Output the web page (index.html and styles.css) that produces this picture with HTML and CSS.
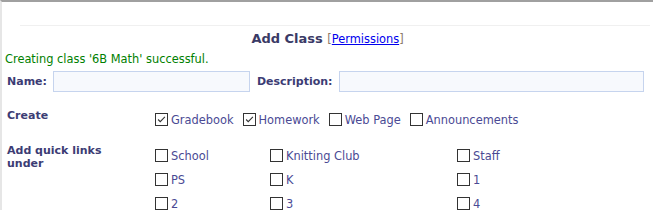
FILE: index.html
```html
<!DOCTYPE html>
<html lang="en">
<head>
    <meta charset="UTF-8">
    <title>Add Class</title>
    <link rel="stylesheet" href="styles.css">
</head>
<body>
    <div class="page">
        <div class="rule"></div>
        <h1 class="title">Add Class <span class="bracket">[<a href="#">Permissions</a>]</span></h1>
        <p class="msg">Creating class '6B Math' successful.</p>

        <div class="fields">
            <label class="lbl">Name:</label>
            <input type="text" class="txt name">
            <label class="lbl desc-lbl">Description:</label>
            <input type="text" class="txt desc">
        </div>

        <div class="row create">
            <div class="lbl">Create</div>
            <div class="opts">
                <span class="opt"><span class="box checked"><svg viewBox="0 0 13 13"><path d="M2.5 6.5 L5 9 L10.5 3.5" fill="none" stroke="#333" stroke-width="1.3"/></svg></span>Gradebook</span>
                <span class="opt"><span class="box checked"><svg viewBox="0 0 13 13"><path d="M2.5 6.5 L5 9 L10.5 3.5" fill="none" stroke="#333" stroke-width="1.3"/></svg></span>Homework</span>
                <span class="opt"><span class="box"></span>Web Page</span>
                <span class="opt"><span class="box"></span>Announcements</span>
            </div>
        </div>

        <div class="row links">
            <div class="lbl">Add quick links<br>under</div>
            <div class="grid">
                <span class="opt"><span class="box"></span>School</span>
                <span class="opt"><span class="box"></span>Knitting Club</span>
                <span class="opt"><span class="box"></span>Staff</span>
                <span class="opt"><span class="box"></span>PS</span>
                <span class="opt"><span class="box"></span>K</span>
                <span class="opt"><span class="box"></span>1</span>
                <span class="opt"><span class="box"></span>2</span>
                <span class="opt"><span class="box"></span>3</span>
                <span class="opt"><span class="box"></span>4</span>
            </div>
        </div>
    </div>
</body>
</html>
```

FILE: styles.css
```css
html, body {
    margin: 0;
    padding: 0;
    background: #fff;
}
body {
    font-family: "DejaVu Sans", Verdana, sans-serif;
    font-size: 11px;
    color: #3c3c6c;
    overflow: hidden;
}
.page {
    border-top: 2px solid #a0a0a0;
    border-left: 2px solid #e6e6e6;
    height: 208px;
}
.rule {
    margin: 23px 3px 0 18px;
    border-top: 1px solid #f0f0f0;
}
.title {
    margin: 0;
    padding-top: 5px;
    height: 19px;
    text-align: center;
    font-size: 13px;
    font-weight: bold;
    color: #3a3a66;
}
.bracket {
    font-size: 11.4px;
    font-weight: normal;
    color: #8a7a6a;
}
.bracket a {
    color: #0000ee;
}
.msg {
    margin: 2px 0 0;
    padding-left: 3px;
    height: 14px;
    line-height: 14px;
    font-size: 11.4px;
    color: #008000;
}
.fields {
    display: flex;
    align-items: center;
    padding: 0 0 0 5px;
    height: 22px;
    margin-top: 4px;
}
.lbl {
    font-weight: bold;
    color: #3c3c74;
}
.txt {
    height: 21px;
    box-sizing: border-box;
    border: 1px solid #c6d4ee;
    background: #f7f9fd;
    padding: 0 3px;
    margin: 0;
    outline: none;
}
.name {
    width: 197px;
    margin-left: 6px;
}
.desc-lbl {
    margin-left: 7px;
}
.desc {
    width: 305px;
    margin-left: 6px;
}
.row {
    display: flex;
    padding-left: 5px;
}
.row > .lbl {
    width: 148px;
    flex-shrink: 0;
    line-height: 13px;
}
.create {
    margin-top: 17px;
}
.create .opts {
    display: flex;
    gap: 9px;
    padding-top: 4px;
}
.opt {
    display: inline-flex;
    align-items: center;
    color: #4a4a94;
    font-size: 11.4px;
    height: 14px;
}
.box {
    width: 11px;
    height: 11px;
    border: 1px solid #333;
    margin-right: 3px;
    display: inline-block;
    position: relative;
    top: -1px;
}
.box svg {
    display: block;
    width: 11px;
    height: 11px;
}
.links {
    margin-top: 17px;
}
.grid {
    display: grid;
    grid-template-columns: 115px 187px auto;
    row-gap: 10px;
    padding-top: 5px;
}
```
